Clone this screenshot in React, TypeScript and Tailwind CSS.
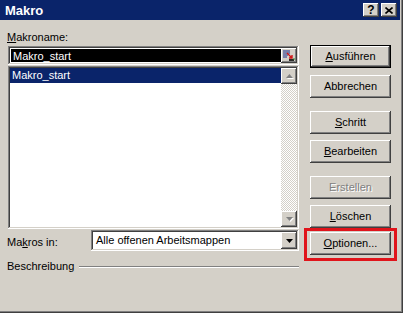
import type { ReactNode } from "react"

const raised = "shadow-[inset_-1px_-1px_0_#404040,inset_1px_1px_0_#ffffff,inset_-2px_-2px_0_#808080,inset_2px_2px_0_#d4d0c8]"
const sunken = "shadow-[inset_-1px_-1px_0_#ffffff,inset_1px_1px_0_#808080,inset_-2px_-2px_0_#d4d0c8,inset_2px_2px_0_#404040]"

const U = ({ children }: { children: ReactNode }) => <span className="underline underline-offset-[1px]">{children}</span>

const Btn = ({ children, def, disabled, className = "" }: { children: ReactNode; def?: boolean; disabled?: boolean; className?: string }) => (
    <button className={`w-[81px] h-[23px] flex items-center justify-center bg-[#d4d0c8] ${raised} ${def ? "border border-black" : ""} ${disabled ? "text-[#808080] [text-shadow:1px_1px_0_#ffffff]" : "text-black"} ${className}`}>
        <span className="leading-[13px]">{children}</span>
    </button>
)

const Arrow = ({ up, dark }: { up?: boolean; dark?: boolean }) => (
    <svg width="7" height="4" viewBox="0 0 7 4" className={dark ? "" : "drop-shadow-[1px_1px_0_#ffffff]"}>
        <path d={up ? "M3.5 0 L7 4 L0 4 Z" : "M0 0 L7 0 L3.5 4 Z"} fill={dark ? "#000000" : "#808080"} />
    </svg>
)

const TitleBtn = ({ children }: { children: ReactNode }) => (
    <div className={`w-[16px] h-[14px] bg-[#d4d0c8] ${raised} flex items-center justify-center`}>{children}</div>
)

export default function App() {
    return (
        <div className="w-[403px] h-[313px] bg-[#404040] pr-px pb-px font-['Liberation_Sans',Arial,sans-serif] text-[11px] text-black select-none">
            <div className="w-full h-full bg-[#808080] pr-px pb-px">
                <div className="w-full h-full bg-[#d4d0c8] pr-px pb-px flex flex-col">
                    <div className="h-[20px] bg-[#0a246a] flex items-center justify-between pl-[5px] pr-[3px] shrink-0">
                        <span className="text-white font-bold text-[13px] leading-[15px]">Makro</span>
                        <div className="flex gap-[2px]">
                            <TitleBtn><span className="font-bold text-[12px] leading-[11px] mt-px">?</span></TitleBtn>
                            <TitleBtn>
                                <svg width="8" height="7" viewBox="0 0 8 7">
                                    <path d="M0.5 0.5 L7.5 6.5 M7.5 0.5 L0.5 6.5" stroke="#000" strokeWidth="1.6" />
                                </svg>
                            </TitleBtn>
                        </div>
                    </div>

                    <div className="flex flex-1">
                        {/* left column */}
                        <div className="ml-[7px] w-[292px] flex flex-col">
                            <div className="mt-[10px] h-[14px] leading-[14px]"><U>M</U>akroname:</div>
                            <div className={`mt-[2px] ml-px h-[19px] bg-white ${sunken} p-[2px] flex`}>
                                <div className="flex-1 ml-px my-px bg-black text-white leading-[14px] pl-[2px]">Makro_start</div>
                                <div className={`w-[16px] h-[15px] bg-[#d4d0c8] ${raised} flex items-center justify-center`}>
                                    <svg width="12" height="11" viewBox="0 0 12 11">
                                        <path d="M0 1 H7 M0 3 H7 M0 5 H5 M0 7 H4" stroke="#1c2f8c" strokeWidth="1" />
                                        <path d="M4 3 L9 8 M9 5 V8 H6" stroke="#d01818" strokeWidth="1.4" fill="none" />
                                        <path d="M6 10 H11" stroke="#000" strokeWidth="1.6" />
                                        <path d="M10 9 H12" stroke="#2b8a2b" strokeWidth="1" />
                                    </svg>
                                </div>
                            </div>
                            <div className={`mt-px ml-px h-[163px] bg-white ${sunken} p-[2px] flex`}>
                                <div className="flex-1">
                                    <div className="h-[15px] bg-[#0a246a] text-white leading-[15px] pl-[2px]">Makro_start</div>
                                </div>
                                <div className="w-[16px] flex flex-col bg-[image:repeating-conic-gradient(#d4d0c8_0_25%,#ffffff_0_50%)] bg-[length:2px_2px]">
                                    <div className={`h-[16px] bg-[#d4d0c8] ${raised} flex items-center justify-center`}><Arrow up /></div>
                                    <div className="flex-1" />
                                    <div className={`h-[16px] bg-[#d4d0c8] ${raised} flex items-center justify-center`}><Arrow /></div>
                                </div>
                            </div>
                            <div className="mt-px flex items-center h-[21px]">
                                <div className="w-[84px] leading-[14px] pt-[3px]">Ma<U>k</U>ros in:</div>
                                <div className={`flex-1 h-[21px] bg-white ${sunken} p-[2px] flex`}>
                                    <div className="flex-1 leading-[17px] pl-[3px]">Alle offenen Arbeitsmappen</div>
                                    <div className={`w-[16px] h-[17px] bg-[#d4d0c8] ${raised} flex items-center justify-center`}><Arrow dark /></div>
                                </div>
                            </div>
                            <div className="mt-[8px] flex items-center h-[14px]">
                                <span className="leading-[14px] pr-[5px]">Beschreibung</span>
                                <div className="flex-1 h-[2px] border-t border-t-[#808080] border-b border-b-white mt-[2px]" />
                            </div>
                        </div>

                        {/* right column */}
                        <div className="ml-[11px] mt-[25px] flex flex-col">
                            <Btn def><U>A</U>usführen</Btn>
                            <Btn className="mt-[7px]">Abbrechen</Btn>
                            <Btn className="mt-[13px]"><U>S</U>chritt</Btn>
                            <Btn className="mt-[6px]"><U>B</U>earbeiten</Btn>
                            <Btn className="mt-[13px]" disabled>Erstellen</Btn>
                            <Btn className="mt-[6px]"><U>L</U>öschen</Btn>
                            <div className="relative mt-[4px]">
                                <Btn><U>O</U>ptionen...</Btn>
                                <div className="absolute -left-[6px] -right-[6px] -top-[4px] -bottom-[6px] border-[3px] border-[#e0141b] pointer-events-none" />
                            </div>
                        </div>
                    </div>
                </div>
            </div>
        </div>
    )
}
